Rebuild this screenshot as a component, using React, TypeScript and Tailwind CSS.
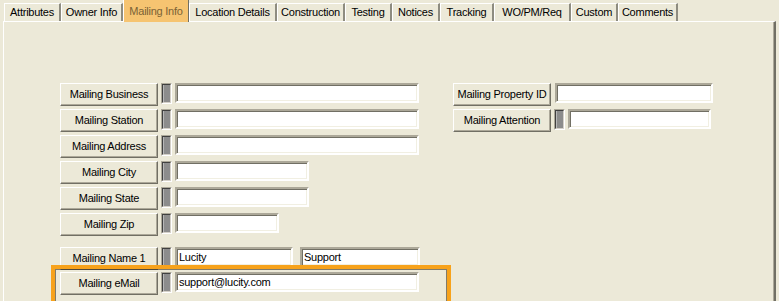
const tabs = [
  { label: 'Attributes', w: 'w-[57px]' },
  { label: 'Owner Info', w: 'w-[62px]' },
  { label: 'Mailing Info', w: 'w-[66px]', active: true },
  { label: 'Location Details', w: 'w-[88px]' },
  { label: 'Construction', w: 'w-[68px]' },
  { label: 'Testing', w: 'w-[47px]' },
  { label: 'Notices', w: 'w-[48px]' },
  { label: 'Tracking', w: 'w-[54px]' },
  { label: 'WO/PM/Req', w: 'w-[77px]' },
  { label: 'Custom', w: 'w-[47px]' },
  { label: 'Comments', w: 'w-[60px]' },
];

const LabelButton = ({ label, w = 'w-[98px]' }: { label: string; w?: string }) => (
  <div
    className={`${w} h-[23px] shrink-0 flex items-center justify-center border border-t-white border-l-white border-r-[#716f64] border-b-[#716f64] shadow-[inset_-1px_-1px_0_#aca899] bg-[#ece9d8] whitespace-nowrap`}
  >
    {label}
  </div>
);

const Indicator = () => (
  <div className="w-[11px] h-[21px] shrink-0 border border-t-[#aca899] border-l-[#aca899] border-r-white border-b-white">
    <div className="w-full h-full border border-t-[#404040] border-l-[#404040] border-r-[#d4d0c8] border-b-[#d4d0c8] bg-[#8c8c8c] shadow-[inset_1px_0_0_#b8b8b8]" />
  </div>
);

const Field = ({ w, value = '' }: { w: string; value?: string }) => (
  <div
    className={`${w} h-[20px] shrink-0 flex items-center pl-[2px] bg-white border-2 border-t-[#aca899] border-l-[#aca899] border-r-white border-b-white shadow-[inset_1px_1px_0_#716f64,inset_-1px_-1px_0_#f1efe2] whitespace-nowrap`}
  >
    {value}
  </div>
);

const Row = ({
  label,
  children,
  indicator = true,
  btnW,
}: {
  label: string;
  children: React.ReactNode;
  indicator?: boolean;
  btnW?: string;
}) => (
  <div className="flex items-start h-[23px]">
    <LabelButton label={label} w={btnW} />
    {indicator && (
      <div className="ml-[3px]">
        <Indicator />
      </div>
    )}
    <div className={`flex gap-[7px] ${indicator ? 'ml-[3px]' : 'ml-[4px]'}`}>{children}</div>
  </div>
);

export default function App() {
  return (
    <div className="w-[779px] h-[301px] overflow-hidden bg-[#ece9d8] font-['Liberation_Sans',Arial,sans-serif] text-[11px] tracking-[-0.25px] text-black">
      {/* Tab strip */}
      <div className="flex items-end h-[21px] pl-[4px]">
        {tabs.map((t) =>
          t.active ? (
            <div
              key={t.label}
              className={`${t.w} h-[22px] -mb-px relative z-10 flex items-center justify-center border-l border-l-white border-r border-r-[#716f64] bg-[#f6c471] text-[#7a6236] whitespace-nowrap`}
            >
              {t.label}
            </div>
          ) : (
            <div
              key={t.label}
              className={`${t.w} h-[18px] flex items-center justify-center border-l border-l-white border-t border-t-white border-r-2 border-r-[#8e8c80] whitespace-nowrap`}
            >
              {t.label}
            </div>
          )
        )}
      </div>

      {/* Panel */}
      <div className="mx-[3px] h-[300px] border-t border-l border-t-white border-l-white border-r-2 border-r-[#716f64] shadow-[inset_-1px_0_0_#aca899]">
        <div className="flex pt-[61px] pl-[56px]">
          {/* Left column */}
          <div className="w-[393px] flex flex-col">
            <div className="flex flex-col gap-[3px]">
              <Row label="Mailing Business">
                <Field w="w-[244px]" />
              </Row>
              <Row label="Mailing Station">
                <Field w="w-[244px]" />
              </Row>
              <Row label="Mailing Address">
                <Field w="w-[244px]" />
              </Row>
              <Row label="Mailing City">
                <Field w="w-[134px]" />
              </Row>
              <Row label="Mailing State">
                <Field w="w-[134px]" />
              </Row>
              <Row label="Mailing Zip">
                <Field w="w-[104px]" />
              </Row>
            </div>
            <div className="flex flex-col gap-[2px] mt-[11px]">
              <Row label="Mailing Name 1">
                <Field w="w-[118px]" value="Lucity" />
                <Field w="w-[120px]" value="Support" />
              </Row>
              <div className="relative">
                <Row label="Mailing eMail">
                  <Field w="w-[244px]" value="support@lucity.com" />
                </Row>
                <div className="absolute left-[-9px] top-[-7px] w-[400px] h-[44px] border-4 border-[#f7a21b] shadow-[inset_0_0_0_1px_rgba(60,50,30,0.6)] pointer-events-none" />
              </div>
            </div>
          </div>

          {/* Right column */}
          <div className="flex flex-col gap-[3px]">
            <Row label="Mailing Property ID" indicator={false} btnW="w-[98px]">
              <Field w="w-[158px]" />
            </Row>
            <Row label="Mailing Attention" btnW="w-[98px]">
              <Field w="w-[143px]" />
            </Row>
          </div>
        </div>
      </div>
    </div>
  );
}
